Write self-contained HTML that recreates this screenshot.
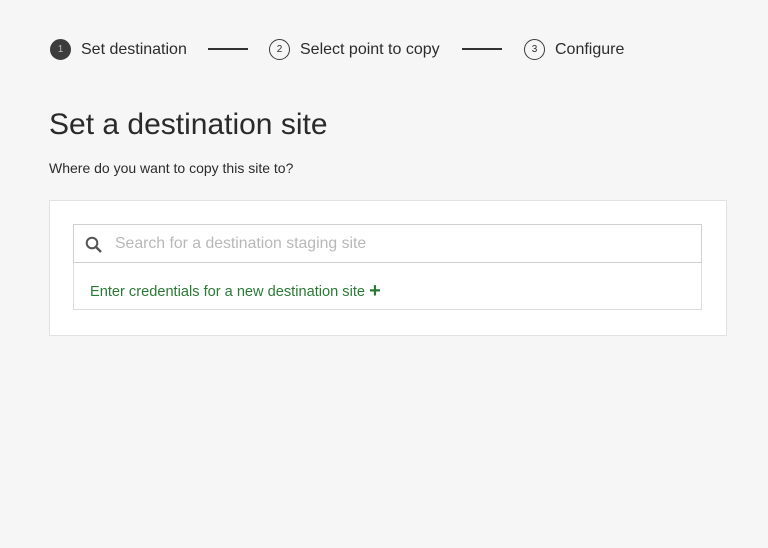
<!DOCTYPE html>
<html><head><style>
body{margin:0;width:768px;height:548px;background:#f6f6f6;font-family:"Liberation Sans",sans-serif;color:#2c2c2c;position:relative;overflow:hidden}
.a{position:absolute;white-space:nowrap}
.c{position:absolute;width:21px;height:21px;border-radius:50%;border:1.3px solid #3a3a3a;box-sizing:border-box;font-size:10px;text-align:center;line-height:19px;top:39px}
.l{position:absolute;top:48px;height:2px;background:#333;width:40px}
.s{font-size:16px;top:41px}
</style></head><body>
<div class="c" style="left:50px;background:#3c3c3c;color:#bbb;border-color:#3c3c3c">1</div>
<div class="a s" style="left:81px">Set destination</div>
<div class="l" style="left:208px"></div>
<div class="c" style="left:269px">2</div>
<div class="a s" style="left:300px">Select point to copy</div>
<div class="l" style="left:462px"></div>
<div class="c" style="left:524px">3</div>
<div class="a s" style="left:555px">Configure</div>
<div class="a" style="left:49px;top:108px;font-size:30px;color:#2a2a2a">Set a destination site</div>
<div class="a" style="left:49px;top:160px;font-size:14px">Where do you want to copy this site to?</div>
<div class="a" style="left:49px;top:200px;width:676px;height:134px;background:#fff;border:1px solid #e2e2e2"></div>
<div class="a" style="left:73px;top:224px;width:627px;height:37px;border:1px solid #cfcfcf;background:#fff"></div>
<svg class="a" style="left:85px;top:236px" width="18" height="18" viewBox="0 0 18 18"><circle cx="7" cy="7" r="5.3" fill="none" stroke="#555" stroke-width="2"/><path d="M11 11l5 5" stroke="#555" stroke-width="2.4"/></svg>
<div class="a" style="left:115px;top:235px;font-size:15.8px;color:#b8b8b8">Search for a destination staging site</div>
<div class="a" style="left:73px;top:263px;width:627px;height:46px;border:1px solid #dcdcdc;border-top:none;background:#fff"></div>
<div class="a" style="left:90px;top:279px;font-size:14.6px;color:#2a7a35">Enter credentials for a new destination site <span style="font-size:20px;position:relative;top:1px;font-weight:bold">+</span></div>
</body></html>
